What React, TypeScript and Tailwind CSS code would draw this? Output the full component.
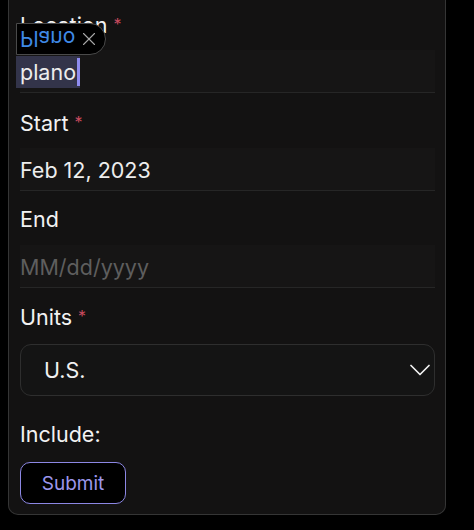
import { X } from "lucide-react"

function Label({ text, required }: { text: string; required?: boolean }) {
  return (
    <div className="h-[28px] text-[21.5px] leading-[28px] text-[#f2f2f2]">
      {text}
      {required && <span className="ml-[6px] align-[3px] text-[16px] text-[#c84a5e]">*</span>}
    </div>
  )
}

function Field({ children }: { children: React.ReactNode }) {
  return (
    <div className="mt-[12px] flex h-[43px] w-[415px] items-center border-b border-[#262626] bg-[#161515] pt-[2px] text-[21.5px]">
      {children}
    </div>
  )
}

export default function App() {
  return (
    <div
      className="h-[530px] w-[474px] overflow-hidden bg-black"
      style={{ fontFamily: "Inter, 'Noto Sans', sans-serif" }}
    >
      <div className="relative ml-[8px] w-[438px] rounded-b-[10px] border-x border-b border-[#353535] bg-[#131212] px-[11px] pt-[10px] pb-[10px]">
        {/* autocomplete chip over the location label */}
        <div className="absolute top-[23px] left-[7px] flex h-[32px] w-[90px] items-center gap-[3px] rounded-r-[16px] border border-[#4a4a4a] bg-black pl-[3px]">
          <span className="inline-block -scale-y-100 pt-[2px] text-[21px] leading-none text-[#3f8ae6]">Plano</span>
          <X className="size-[22px] text-[#a8a8a8]" strokeWidth={1.2} />
        </div>

        <Label text="Location" required />
        <Field>
          <span className="-ml-[4px] flex h-[32px] items-center bg-[#33344a] pl-[4px] text-[#ededed]">
            plano
            <span className="ml-[1px] inline-block h-[28px] w-[3px] bg-[#8f8cf0]" />
          </span>
        </Field>

        <div className="mt-[15px]">
          <Label text="Start" required />
        </div>
        <Field>
          <span className="text-[#ededed]">Feb 12, 2023</span>
        </Field>

        <div className="mt-[14px]">
          <Label text="End" />
        </div>
        <Field>
          <span className="text-[#5e5e5e]">MM/dd/yyyy</span>
        </Field>

        <div className="mt-[14px]">
          <Label text="Units" required />
        </div>
        <div className="mt-[14px] flex h-[52px] w-[415px] items-center justify-between rounded-[11px] border border-[#2e2e2e] bg-[#141414] pr-[4px] pl-[23px]">
          <span className="text-[21.5px] text-[#f0f0f0]">U.S.</span>
          <svg width="20" height="12" viewBox="0 0 20 12" fill="none" stroke="#f0f0f0" strokeWidth="1.7" strokeLinecap="round" strokeLinejoin="round">
            <polyline points="1,1.5 10,10.5 19,1.5" />
          </svg>
        </div>

        <div className="mt-[24px]">
          <Label text="Include:" />
        </div>
        <button className="mt-[14px] flex h-[42px] w-[106px] items-center justify-center rounded-[10px] border-[1.5px] border-[#8c87e4] bg-black pt-[3px] text-[19px] text-[#9c97ec]">
          Submit
        </button>
      </div>
    </div>
  )
}
